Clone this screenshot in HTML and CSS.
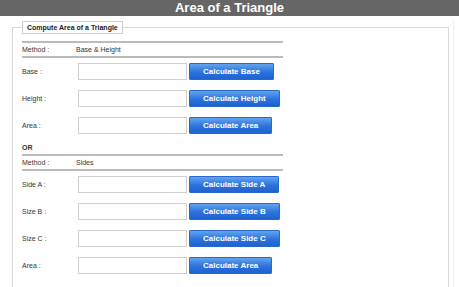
FILE: index.html
```html
<!DOCTYPE html>
<html lang="en">
<head>
    <meta charset="UTF-8">
    <meta name="viewport" content="width=device-width, initial-scale=1.0">
    <title>Area of a Triangle</title>
    <link rel="stylesheet" href="styles.css">
</head>
<body>
    <div class="header">Area of a Triangle</div>
    <div class="wrapper">
        <fieldset class="calc">
            <legend>Compute Area of a Triangle</legend>
            <!-- Base and height method -->
            <div class="method first"><span class="label">Method :</span><span>Base &amp; Height</span></div>
            <div class="row"><span class="label">Base :</span><input type="text"><button>Calculate Base</button></div>
            <div class="row"><span class="label">Height :</span><input type="text"><button>Calculate Height</button></div>
            <div class="row"><span class="label">Area :</span><input type="text"><button>Calculate Area</button></div>
            <div class="or">OR</div>
            <!-- Sides method -->
            <div class="method"><span class="label">Method :</span><span>Sides</span></div>
            <div class="row"><span class="label">Side A :</span><input type="text"><button>Calculate Side A</button></div>
            <div class="row"><span class="label">Size B :</span><input type="text"><button>Calculate Side B</button></div>
            <div class="row"><span class="label">Size C :</span><input type="text"><button>Calculate Side C</button></div>
            <div class="row"><span class="label">Area :</span><input type="text"><button>Calculate Area</button></div>
        </fieldset>
    </div>
</body>
</html>
```

FILE: styles.css
```css
body {
    margin: 0;
    padding: 0;
    font-family: 'Liberation Sans', Arial, sans-serif;
    color: #333;
    background: #fff;
}
.header {
    height: 16px;
    line-height: 16px;
    background: #666;
    color: white;
    font-size: 13px;
    font-weight: bold;
    text-align: center;
}
.wrapper {
    margin: 5px 5px 0 0;
    border-right: 1px solid #eee;
}
.calc {
    margin: 0 4px 0 12px;
    padding: 7px 0 20px 9px;
    border: 1px solid #d8d8d8;
    min-width: 0;
}
.calc legend {
    padding: 0 4px;
    border: 1px solid #ccc;
    font-size: 7px;
    font-weight: bold;
    line-height: 11px;
    color: #222;
    background: white;
}
.method {
    width: 261px;
    display: flex;
    border-top: 2px solid #bbb;
    border-bottom: 2px solid #bbb;
    font-size: 7px;
    line-height: 13px;
}
.method .label {
    width: 54px;
}
.row {
    height: 27px;
    box-sizing: border-box;
    padding-top: 5px;
    display: flex;
    align-items: flex-start;
}
.row .label {
    width: 56px;
    font-size: 7px;
    line-height: 17px;
}
.row input {
    width: 109px;
    height: 17px;
    box-sizing: border-box;
    margin: 0 2px 0 0;
    padding: 0 3px;
    border: 1px solid #d0d0d0;
    font-size: 8px;
}
.row button {
    height: 17px;
    padding: 0 13px;
    border: 1px solid #2b69c9;
    border-radius: 1px;
    background: linear-gradient(#62a3f0, #2c72de 55%, #1e62d0);
    color: white;
    font-family: 'Liberation Sans', Arial, sans-serif;
    font-size: 8px;
    font-weight: bold;
    line-height: 15px;
    cursor: pointer;
}
.or {
    padding-top: 3px;
    line-height: 12px;
    font-size: 7px;
    font-weight: bold;
}
```
